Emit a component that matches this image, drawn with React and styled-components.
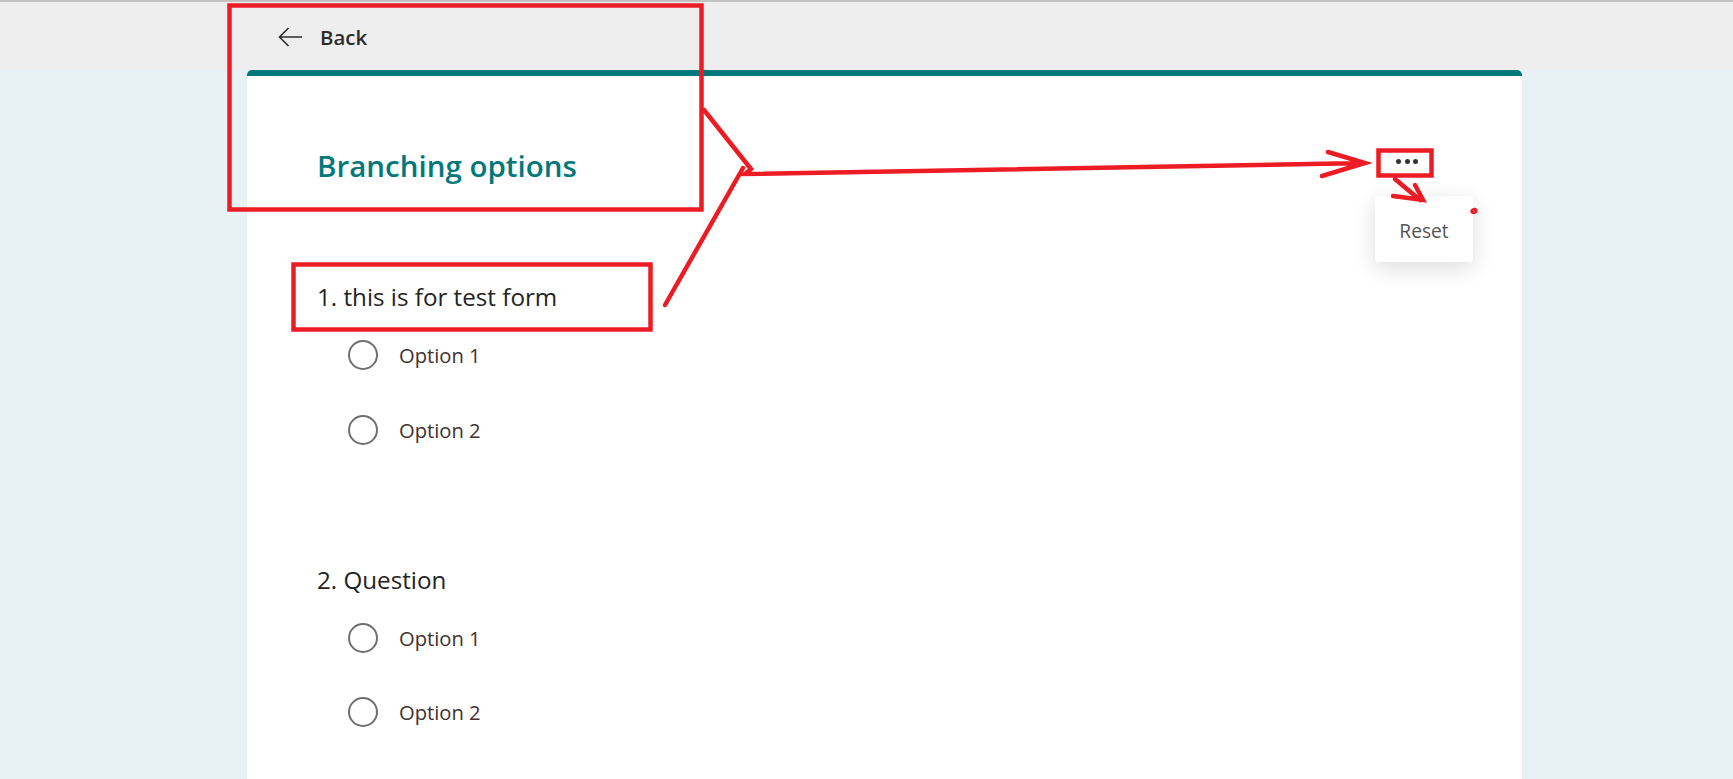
import React from "react";
import styled, { createGlobalStyle } from "styled-components";

const Global = createGlobalStyle`
  html, body { margin: 0; padding: 0; height: 100%; overflow: hidden; background: #e8f1f4; }
  * { box-sizing: border-box; }
  body { font-family: "Open Sans", "Noto Sans", "Liberation Sans", sans-serif; }
`;

const Page = styled.div`
  position: relative;
  width: 1733px;
  height: 779px;
  overflow: hidden;
  background: #e8f1f4;
`;
const TopBar = styled.header`
  height: 70px;
  background: #eeeeee;
  border-top: 2px solid #c2c2c2;
  padding-left: 278px;
  padding-top: 2px;
  display: flex;
  align-items: center;
`;
const BackButton = styled.button`
  display: flex;
  align-items: center;
  gap: 18px;
  padding: 0;
  border: 0;
  background: none;
  color: #2b2b2b;
  font: 600 20.4px/26px "Open Sans", sans-serif;
`;
const Card = styled.main`
  position: relative;
  width: 1275px;
  height: 709px;
  margin-left: 247px;
  background: #ffffff;
  border-top: 6px solid #03787c;
  border-radius: 5px 5px 0 0;
  padding: 68px 0 0 70px;
`;
const Title = styled.h1`
  margin: 0 0 92px;
  color: #03787c;
  font: 600 29.5px/44px "Open Sans", sans-serif;
`;
const Question = styled.section`
  margin-bottom: ${(p) => p.$gap}px;
`;
const QuestionTitle = styled.div`
  color: #252423;
  font: 400 24.2px/34px "Open Sans", sans-serif;
  margin-bottom: 26px;
`;
const Option = styled.label`
  display: flex;
  align-items: center;
  gap: 21px;
  height: 30px;
  margin: 0 0 44.5px 31px;
`;
const Radio = styled.span`
  width: 30px;
  height: 30px;
  flex: none;
  border: 2px solid #6f6f6f;
  border-radius: 50%;
`;
const OptionText = styled.span`
  color: #3f3230;
  font: 400 20.2px/30px "Open Sans", sans-serif;
`;
const MoreButton = styled.div`
  position: absolute;
  left: 1149px;
  top: 83px;
  display: flex;
  gap: 3.6px;
`;
const Dot = styled.span`
  width: 5px;
  height: 5px;
  border-radius: 50%;
  background: #333333;
`;
const Menu = styled.div`
  position: absolute;
  left: 1128px;
  top: 120px;
  width: 98px;
  height: 66px;
  padding-top: 3px;
  border-radius: 3px;
  background: #ffffff;
  box-shadow: 0 6px 22px rgba(0, 0, 0, 0.14);
  display: flex;
  align-items: center;
  justify-content: center;
  color: #555555;
  font: 400 19.2px/24px "Open Sans", sans-serif;
`;
const Overlay = styled.svg`
  position: absolute;
  left: 0;
  top: 0;
  pointer-events: none;
`;

const QuestionBlock = ({ title, gap }) => (
  <Question $gap={gap}>
    <QuestionTitle>{title}</QuestionTitle>
    <Option><Radio /><OptionText>Option 1</OptionText></Option>
    <Option><Radio /><OptionText>Option 2</OptionText></Option>
  </Question>
);

export default function App() {
  return (
    <Page>
      <Global />
      <TopBar>
        <BackButton>
          <svg width="24" height="20" viewBox="0 0 24 20" fill="none" stroke="#2b2b2b" strokeWidth="1.6">
            <path d="M24 10H1.5M10.5 1L1.5 10l9 9" />
          </svg>
          Back
        </BackButton>
      </TopBar>
      <Card>
        <Title>Branching options</Title>
        <QuestionBlock title="1. this is for test form" gap={118} />
        <QuestionBlock title="2. Question" gap={0} />
        <MoreButton><Dot /><Dot /><Dot /></MoreButton>
        <Menu>Reset</Menu>
      </Card>
      <Overlay width="1733" height="779" viewBox="0 0 1733 779" fill="none" stroke="#ed1c24" strokeWidth="4.5" strokeLinecap="round">
        <rect x="229.5" y="5.5" width="472" height="204" strokeLinecap="butt" />
        <rect x="293.5" y="264.5" width="357" height="65" strokeLinecap="butt" />
        <rect x="1378.5" y="150.5" width="53" height="25" strokeLinecap="butt" />
        <path d="M704 110L751 169L745 174L1365 163M1328 152L1365 163L1322 176M743 168L665 305" />
        <path d="M1395 179L1420 200M1415 185L1423 200L1393 196" />
        <ellipse cx="1474" cy="211" rx="1.5" ry="0.8" fill="#ed1c24" transform="rotate(-25 1474 211)" />
      </Overlay>
    </Page>
  );
}
